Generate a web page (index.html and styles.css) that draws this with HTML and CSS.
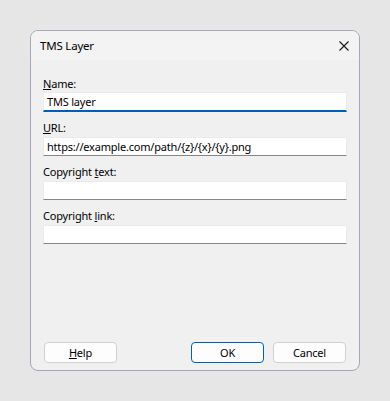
FILE: index.html
```html
<!DOCTYPE html>
<html>

<head>
    <meta charset="UTF-8">
    <meta name="viewport" content="width=device-width" />
    <title>TMS Layer</title>
    <link rel="stylesheet" href="styles.css">
</head>
<body>

<div class="dialog">
    <div class="titlebar">
        <span class="title">TMS Layer</span>
        <svg class="close" viewBox="0 0 10 10" width="10" height="10">
            <path d="M0.5 0.5 L9.5 9.5 M9.5 0.5 L0.5 9.5" stroke="#1a1a1a" stroke-width="1.1" fill="none" />
        </svg>
    </div>

    <div class="content">
        <div class="field">
            <label><u>N</u>ame:</label>
            <div class="input focused">TMS layer</div>
        </div>
        <div class="field">
            <label><u>U</u>RL:</label>
            <div class="input">https://example.com/path/{z}/{x}/{y}.png</div>
        </div>
        <div class="field">
            <label>Copyright <u>t</u>ext:</label>
            <div class="input"></div>
        </div>
        <div class="field">
            <label>Copyright <u>l</u>ink:</label>
            <div class="input"></div>
        </div>

        <div class="buttons">
            <div class="button"><u>H</u>elp</div>
            <div class="button-group">
                <div class="button default">OK</div>
                <div class="button">Cancel</div>
            </div>
        </div>
    </div>
</div>

</body>
</html>
```

FILE: styles.css
```css
html {
    font-family: "Noto Sans", "Liberation Sans", sans-serif;
    font-size: 11px;
    letter-spacing: -0.2px;
    box-sizing: border-box;
}

*,
*:before,
*:after {
    box-sizing: inherit;
}

body {
    margin: 0;
    width: 390px;
    height: 401px;
    padding: 30px;
    background-color: #e6e6e6;
    color: #000;
}

.dialog {
    width: 330px;
    height: 341px;
    border: 1px solid #a3a8b4;
    border-radius: 8px;
    background-color: #f0f0f0;
    overflow: hidden;
    display: flex;
    flex-direction: column;
}

.titlebar {
    height: 29px;
    flex: none;
    background-color: #f3f3f3;
    display: flex;
    align-items: center;
    justify-content: space-between;
    padding: 0 10px 0 9px;
}

.title {
    font-size: 11.5px;
    line-height: 16px;
    margin-top: 1px;
}

.close {
    margin-top: 1px;
}

.content {
    flex: 1;
    display: flex;
    flex-direction: column;
    gap: 8px;
    padding: 16px 12px 7px 12px;
}

.field {
    display: flex;
    flex-direction: column;
}

.field label {
    line-height: 16px;
    height: 16px;
    margin-bottom: 1px;
}

.input {
    height: 19px;
    line-height: 17px;
    padding: 0 3px;
    background-color: #fff;
    border: 1px solid #ebebeb;
    border-bottom-color: #868686;
    white-space: nowrap;
    overflow: hidden;
}

.input.focused {
    height: 20px;
    margin-top: -1px;
    border-bottom: 2px solid #005fb8;
}

.buttons {
    margin-top: auto;
    display: flex;
    justify-content: space-between;
    padding: 0 1px;
}

.button-group {
    display: flex;
    gap: 9px;
}

.button {
    width: 73px;
    height: 21px;
    line-height: 19px;
    text-align: center;
    background-color: #fdfdfd;
    border: 1px solid #d0d0d0;
    border-radius: 4px;
}

.button.default {
    border-color: #005fb8;
}
```
